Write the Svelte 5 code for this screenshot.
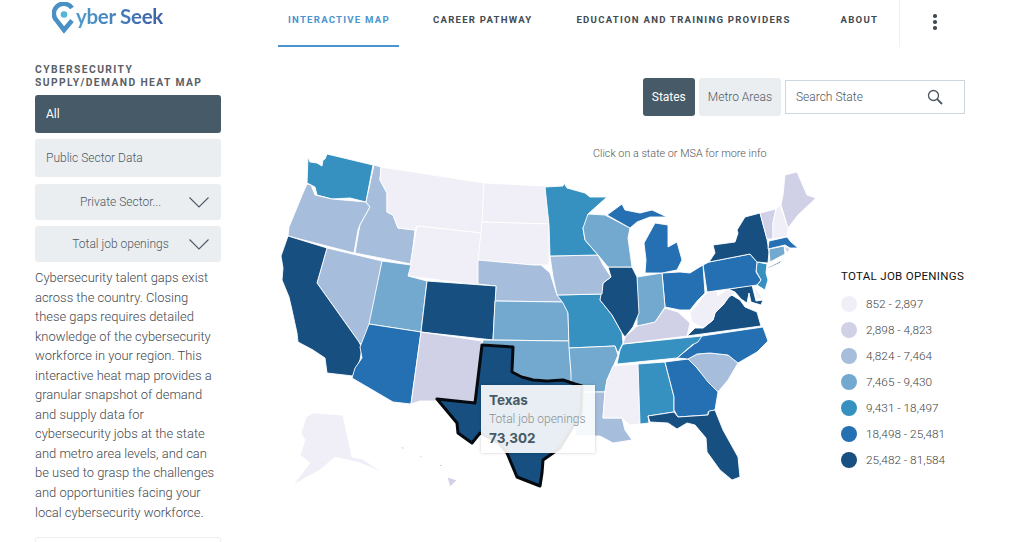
<script>
  const colors = ['#f0eef6', '#d0d1e6', '#a6bddb', '#74a9cf', '#3690c0', '#2470b2', '#164f80'];
  const legend = ['852 - 2,897', '2,898 - 4,823', '4,824 - 7,464', '7,465 - 9,430', '9,431 - 18,497', '18,498 - 25,481', '25,482 - 81,584'];
  const nav = ['Interactive Map', 'Career Pathway', 'Education and Training Providers', 'About'];
  const states = [
    [4, '308,157 310,162 317,163 322,166 323,160 325,159 327,154 373,165 366,202 350,198 332,199 317,195 315,187 307,183'],
    [2, '307,184 311,185 315,195 332,199 366,202 370,207 360,225 358,230 354,253 288,236 289,227 303,193'],
    [2, '374,165 381,167 380,180 387,193 387,212 393,215 398,228 415,230 411,264 355,253 359,230 360,225 370,207 366,202'],
    [0, '381,167 484,183 482,233 417,226 415,230 398,228 393,215 387,212 387,193 380,180'],
    [0, '417,226 481,233 478,285 408,276'],
    [0, '484,183 545,186 549,224 482,222'],
    [0, '482,222 549,224 549,265 533,265 478,260'],
    [2, '478,260 533,265 541,265 550,273 557,295 563,302 495,301 496,286 478,284'],
    [2, '327,248 382,261 369,333 363,346 359,342 317,283'],
    [6, '288,236 327,248 317,283 359,342 362,348 360,360 353,376 327,373 325,358 313,350 298,342 297,333 292,310 289,297 282,280 283,268 281,256'],
    [3, '382,261 411,265 408,276 427,281 421,332 369,324'],
    [6, '427,281 496,286 493,340 421,332'],
    [5, '369,324 421,332 411,404 393,402 352,378 355,368 362,358 360,347'],
    [1, '421,332 482,341 475,402 437,399 438,401 420,401 411,404'],
    [3, '495,301 563,302 568,312 569,341 493,340'],
    [3, '483,340 569,341 570,357 572,384 563,380 533,380 513,372 513,347 482,344'],
    [4, '557,295 602,294 600,300 612,315 622,333 623,343 618,353 615,346 569,348 568,313 563,303'],
    [3, '569,348 615,346 618,355 613,367 607,380 605,392 571,392 571,373'],
    [2, '572,392 605,392 603,418 622,418 625,430 632,440 613,443 600,436 575,436 578,415'],
    [0, '613,366 638,364 640,424 630,425 622,418 603,418 605,392 607,380'],
    [4, '638,364 665,362 674,397 674,412 648,416 649,423 640,424'],
    [5, '665,362 688,359 697,368 718,392 715,410 708,412 708,415 678,417 674,410 674,397'],
    [6, '648,416 674,412 678,417 708,415 709,411 715,410 723,430 738,457 740,477 732,480 720,470 707,452 706,438 695,425 687,423 677,429 668,423 650,422'],
    [2, '688,359 697,354 710,353 728,355 738,363 728,380 718,392 708,382 697,368'],
    [5, '677,358 693,345 702,336 763,327 768,341 757,352 738,363 728,355 710,353 697,354 688,359'],
    [4, '623,344 702,336 698,342 692,345 677,358 617,364 620,350'],
    [1, '623,344 625,337 637,326 655,322 665,308 678,312 690,323 687,336'],
    [6, '687,336 695,328 703,328 713,320 715,313 723,305 730,294 740,300 745,307 757,312 761,326'],
    [0, '690,313 703,297 707,292 717,291 718,296 728,289 735,293 729,297 723,305 715,313 713,320 703,328 692,322'],
    [6, '718,291 752,285 756,301 763,300 761,305 751,302 749,293 747,303 741,299 735,292 728,289'],
    [0, '753,286 763,298 757,299'],
    [4, '757,262 767,264 766,273 768,280 765,290 757,285 761,280 756,271'],
    [5, '703,265 709,262 750,254 757,262 756,272 761,280 757,285 707,292'],
    [6, '760,213 767,239 769,252 768,263 757,262 750,254 709,262 715,253 713,245 735,242 738,233 737,230 745,217'],
    [6, '767,268 783,260 780,263 769,268'],
    [3, '769,249 784,246 785,254 770,262'],
    [1, '784,246 790,249 787,253'],
    [5, '769,241 787,237 791,242 798,248 790,248 785,245 768,249'],
    [1, '760,213 776,209 773,223 773,239 767,239'],
    [0, '776,209 780,205 788,228 787,236 773,239 773,223'],
    [1, '785,175 797,172 807,195 816,198 798,215 788,228 781,205 783,195'],
    [5, '662,273 680,272 690,273 698,268 703,265 705,293 698,300 690,310 680,310 665,307'],
    [3, '637,277 662,273 665,307 655,322 637,326'],
    [6, '608,267 632,267 637,277 639,313 633,327 625,337 622,333 612,315 600,300 603,283 611,277'],
    [2, '550,256 598,255 603,265 611,277 603,283 602,294 557,295 553,277'],
    [4, '545,187 563,186 564,183 567,188 585,193 590,197 607,197 588,214 587,222 583,228 585,240 598,255 550,256 549,225'],
    [3, '588,214 605,215 630,228 628,238 632,267 608,267 598,255 585,240 583,228'],
    [5, '607,215 622,204 625,210 640,213 652,210 667,217 650,217 637,222 630,228'],
    [5, '645,273 646,260 644,243 655,223 668,225 668,247 677,242 682,260 677,270 662,273'],
    [0, '301,433 306,417 313,413 343,415 352,457 363,459 383,473 360,463 335,457 320,470 293,485 310,463 300,455 305,440'],
    [1, '447,477 457,480 450,487'],
    [1, '400,447 404,447 404,450'],
    [1, '418,455 422,456 421,458'],
    [1, '438,464 443,465 441,467']
  ];
  const texas = '482,345 513,347 512,372 522,377 533,380 547,381 563,380 575,384 582,386 581,413 560,448 553,453 543,460 542,473 540,486 517,477 507,453 499,443 480,433 472,443 458,433 457,423 437,399 475,403';
  const copy = ['Cybersecurity talent gaps exist', 'across the country. Closing', 'these gaps requires detailed', 'knowledge of the cybersecurity', 'workforce in your region. This', 'interactive heat map provides a', 'granular snapshot of demand', 'and supply data for', 'cybersecurity jobs at the state', 'and metro area levels, and can', 'be used to grasp the challenges', 'and opportunities facing your', 'local cybersecurity workforce.'];
</script>

<div class="page">
  <header>
    <div class="logo">
      <svg width="24" height="32" viewBox="0 0 24 32" aria-hidden="true">
        <path d="M20 6 A10 10 0 1 0 5.5 19.5 L12 28 L20 18.5" fill="none" stroke="#4a90c4" stroke-width="4.6"/>
        <circle cx="12" cy="12.5" r="3.3" fill="#55b6d8"/>
      </svg>
      <span>yber Seek</span>
    </div>
    <nav>
      {#each nav as item, i}
        <a class:active={i === 0} href="#top">{item}</a>
      {/each}
    </nav>
    <div class="more"><i></i><i></i><i></i></div>
  </header>

  <div class="content">
    <aside>
      <h2>Cybersecurity<br />Supply/Demand Heat Map</h2>
      <div class="btn on tall">All</div>
      <div class="btn tall">Public Sector Data</div>
      <div class="btn select">
        <span>Private Sector...</span>
        <svg width="20" height="11" viewBox="0 0 20 11"><path d="M0.5 0.5 L10 10 L19.5 0.5" fill="none" stroke="#4c5964" stroke-width="1.1"/></svg>
      </div>
      <div class="btn select">
        <span>Total job openings</span>
        <svg width="20" height="11" viewBox="0 0 20 11"><path d="M0.5 0.5 L10 10 L19.5 0.5" fill="none" stroke="#4c5964" stroke-width="1.1"/></svg>
      </div>
      <p>{#each copy as line}{line}<br />{/each}</p>
      <div class="box"></div>
    </aside>

    <main>
      <div class="toolbar">
        <div class="seg on">States</div>
        <div class="seg">Metro Areas</div>
        <div class="search">
          <span>Search State</span>
          <svg width="16" height="16" viewBox="0 0 16 16"><circle cx="6.5" cy="6.5" r="5" fill="none" stroke="#4a5660" stroke-width="1.3"/><path d="M10.2 10.2 L15 15" stroke="#4a5660" stroke-width="1.8"/></svg>
        </div>
      </div>

      <div class="stage">
        <div class="map">
          <div class="hint">Click on a state or MSA for more info</div>
          <svg width="560" height="360" viewBox="270 140 560 360">
            {#each states as [level, points]}
              <polygon {points} fill={colors[level]} stroke="#fff" stroke-width="0.9" stroke-linejoin="round" />
            {/each}
            <polygon points={texas} fill={colors[6]} stroke="#050a10" stroke-width="3" stroke-linejoin="round" />
          </svg>
          <div class="tip">
            <strong>Texas</strong>
            <span>Total job openings</span>
            <strong>73,302</strong>
          </div>
        </div>
        <div class="legend">
          <h3>Total job openings</h3>
          <ul>
            {#each legend as label, i}
              <li><i style="background:{colors[i]}"></i>{label}</li>
            {/each}
          </ul>
        </div>
      </div>
    </main>
  </div>
</div>

<style>
  :global(body) { margin: 0; background: #fff; }
  .page { width: 1011px; height: 542px; overflow: hidden; font-family: Roboto, "Liberation Sans", sans-serif; color: #4c5964; }
  header { display: flex; height: 47px; }
  .logo { width: 278px; padding: 2px 0 0 52px; box-sizing: border-box; display: flex; align-items: flex-start; }
  .logo svg { flex: none; }
  .logo span { font: 700 20.5px/28px Lato, sans-serif; letter-spacing: -0.3px; background: linear-gradient(90deg, #4f9ccb, #3d5ea6); -webkit-background-clip: text; background-clip: text; color: transparent; }
  nav { display: flex; width: 621px; border-right: 1px solid #f0f0f0; }
  nav a { height: 47px; box-sizing: border-box; padding: 13px 10px 0; margin-right: 24px; font: 700 9.6px/13px Roboto, sans-serif; letter-spacing: 1.24px; text-transform: uppercase; text-decoration: none; color: #434b52; white-space: nowrap; }
  nav a:nth-child(3) { margin-right: 30px; }
  nav a.active { color: #4a94d0; border-bottom: 2px solid #4a94d0; padding-right: 9.5px; margin-right: 23.5px; }
  .more { display: flex; flex-direction: column; gap: 2.5px; padding: 14px 0 0 33px; }
  .more i { width: 3.5px; height: 3.5px; border-radius: 50%; background: #434b52; }

  .content { display: grid; grid-template-columns: 221px 1fr; }
  aside { padding: 17px 0 0 35px; }
  h2 { margin: 0 0 6px; font: 700 10.3px/12.5px Roboto, sans-serif; letter-spacing: 1.4px; text-transform: uppercase; color: #5a6067; white-space: nowrap; }
  .btn { border-radius: 3px; background: #ebeef1; font-size: 12px; font-weight: 300; color: #4c5964; margin-bottom: 6px; box-sizing: border-box; }
  .tall { height: 38px; line-height: 38px; padding-left: 11px; }
  .on { background: #465a67; color: #fff; font-weight: 400; }
  .select { height: 36px; display: flex; align-items: center; padding-right: 12px; }
  .select span { flex: 1; text-align: center; padding-left: 17px; }
  .btn:nth-of-type(2) { margin-bottom: 7px; }
  p { margin: 4px 0 0; font-size: 12.95px; font-weight: 300; line-height: 19.55px; color: #3f4850; white-space: nowrap; }
  .box { height: 30px; margin-top: 15px; border: 1px solid #eceff1; border-radius: 3px; }

  main { min-width: 0; padding-top: 31px; }
  .toolbar { display: flex; justify-content: flex-end; align-items: center; gap: 4px; height: 38px; padding-right: 46px; }
  .seg { height: 38px; line-height: 38px; padding: 0 9px; border-radius: 3px; background: #ebeef1; font-size: 12px; font-weight: 300; color: #4c5964; }
  .seg.on { background: #465a67; color: #fff; font-weight: 400; }
  .search { width: 180px; height: 34px; box-sizing: border-box; border: 1px solid #ccd6dc; display: flex; align-items: center; justify-content: space-between; padding: 0 21px 0 10px; font-size: 12px; font-weight: 300; color: #4c5964; }
  .stage { display: flex; margin: 24px 0 0 49px; }
  .map { position: relative; width: 560px; height: 360px; flex: none; }
  .map svg { display: block; }
  .hint { position: absolute; left: 323px; top: 7px; font-size: 10.8px; font-weight: 300; color: #555; white-space: nowrap; }
  .tip { position: absolute; left: 211px; top: 245px; width: 114px; height: 68px; box-sizing: border-box; padding: 7px 8px; background: rgba(255, 255, 255, 0.9); box-shadow: 0 0 3px rgba(0, 0, 0, 0.2); display: flex; flex-direction: column; gap: 3px; }
  .tip strong { font: 700 13.5px/16px Inter, sans-serif; color: #465a67; }
  .tip span { font-size: 12px; font-weight: 300; line-height: 16px; color: #8a8f94; white-space: nowrap; }
  .legend { margin: 128px 0 0 11px; }
  h3 { margin: 0 0 7px; font: 400 11.5px/16px Roboto, sans-serif; letter-spacing: 0.3px; text-transform: uppercase; color: #111; white-space: nowrap; }
  ul { margin: 0; padding: 0; list-style: none; }
  li { display: flex; align-items: center; height: 26px; gap: 9px; font-size: 11.8px; font-weight: 300; color: #444; white-space: nowrap; }
  li i { width: 16px; height: 16px; border-radius: 50%; }
</style>
